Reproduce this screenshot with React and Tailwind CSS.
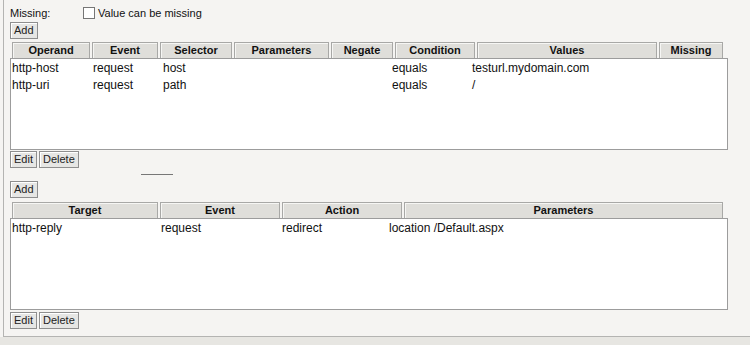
import React from "react"

const font = { fontFamily: "'Liberation Sans', Arial, sans-serif" }

const ruleCols = [
  ["Operand", 78],
  ["Event", 66],
  ["Selector", 72],
  ["Parameters", 95],
  ["Negate", 62],
  ["Condition", 80],
  ["Values", 180],
  ["Missing", 64],
]

const actionCols = [
  ["Target", 146],
  ["Event", 120],
  ["Action", 120],
  ["Parameters", 319],
]

function Btn({ children }) {
  return (
    <button className="h-[17px] px-[3px] border border-[#8e8e8e] bg-[#e6e6e4] shadow-[inset_1px_1px_0_#fff] text-[11px] leading-none text-[#222]">
      {children}
    </button>
  )
}

function Header({ cols }) {
  return (
    <div className="flex gap-[2px] ml-[2px] h-[16px]">
      {cols.map(([label, w]) => (
        <div
          key={label}
          style={{ width: w }}
          className="shrink-0 border border-[#a8a8a6] border-b-0 bg-[#dfdeda] shadow-[inset_1px_1px_0_#f6f6f4] text-[11px] font-bold text-center leading-[15px] text-[#111]"
        >
          {label}
        </div>
      ))}
    </div>
  )
}

function ListBox({ rows, widths }) {
  return (
    <div className="h-[92px] w-[718px] bg-white border border-[#9c9c9c]">
      {rows.map((r, i) => (
        <div key={i} className="flex h-[17px] items-center text-[12px] text-[#111] pl-[1px]">
          {r.map((c, j) => (
            <span key={j} style={{ width: widths[j] }} className="shrink-0 whitespace-nowrap">
              {c}
            </span>
          ))}
        </div>
      ))}
    </div>
  )
}

export default function App() {
  return (
    <div className="w-[750px] h-[345px] bg-[#f5f4f2] flex flex-col overflow-hidden" style={font}>
      <div className="flex-1 ml-[3px] border-l border-b border-[#b4b4b2] pl-[6px] pt-[5px] flex flex-col items-start">
        <div className="flex items-center h-[16px] text-[11px] text-[#111]">
          <span className="w-[73px]">Missing:</span>
          <span className="w-[12px] h-[12px] border border-[#767676] bg-white mr-[3px]" />
          <span>Value can be missing</span>
        </div>
        <div className="flex mt-[1px]">
          <Btn>Add</Btn>
        </div>
        <div className="mt-[3px]">
          <Header cols={ruleCols} />
          <ListBox
            widths={[81, 70, 229, 80, 200]}
            rows={[
              ["http-host", "request", "host", "equals", "testurl.mydomain.com"],
              ["http-uri", "request", "path", "equals", "/"],
            ]}
          />
        </div>
        <div className="flex gap-[2px] mt-[1px]">
          <Btn>Edit</Btn>
          <Btn>Delete</Btn>
        </div>
        <div className="ml-[131px] mt-[6px] w-[32px] h-[1px] bg-[#777]" />
        <div className="flex mt-[6px]">
          <Btn>Add</Btn>
        </div>
        <div className="mt-[4px]">
          <Header cols={actionCols} />
          <ListBox
            widths={[149, 121, 107, 300]}
            rows={[["http-reply", "request", "redirect", "location /Default.aspx"]]}
          />
        </div>
        <div className="flex gap-[2px] mt-[2px]">
          <Btn>Edit</Btn>
          <Btn>Delete</Btn>
        </div>
      </div>
      <div className="h-[8px] bg-[#e7e6e2]" />
    </div>
  )
}
